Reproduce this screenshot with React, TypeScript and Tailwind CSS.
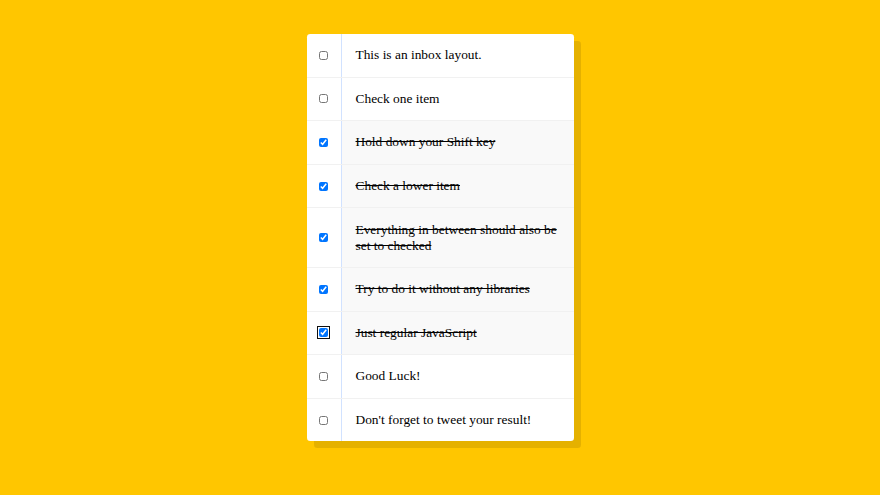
import React from "react";

const items: { text: string; checked: boolean; focus?: boolean }[] = [
  { text: "This is an inbox layout.", checked: false },
  { text: "Check one item", checked: false },
  { text: "Hold down your Shift key", checked: true },
  { text: "Check a lower item", checked: true },
  { text: "Everything in between should also be set to checked", checked: true },
  { text: "Try to do it without any libraries", checked: true },
  { text: "Just regular JavaScript", checked: true, focus: true },
  { text: "Good Luck!", checked: false },
  { text: "Don't forget to tweet your result!", checked: false },
];

export default function App() {
  return (
    <div className="min-h-screen w-full bg-[#ffc600] flex flex-col items-center pt-[34px]">
      <div className="w-[267px] bg-white rounded-[3.3px] shadow-[7px_7px_0_rgba(0,0,0,0.1)]">
        {items.map((it, i) => (
          <div
            key={i}
            className={`flex items-center ${i < items.length - 1 ? "border-b border-[#F1F1F1]" : ""}`}
          >
            <div className="w-[34px] shrink-0 flex items-center justify-center">
              <input
                type="checkbox"
                defaultChecked={it.checked}
                className={`m-0 w-[9px] h-[9px] accent-[#0075ff] ${
                  it.focus ? "outline-[1.5px] outline-solid outline-[#101010] outline-offset-[1px] rounded-[2px]" : ""
                }`}
              />
            </div>
            <p
              className={`flex-1 m-0 pl-[14px] pr-[13px] py-[13.3px] border-l border-[#D1E2FF] text-[13.4px] leading-[16px] text-black ${
                it.checked ? "bg-[#F9F9F9] line-through" : ""
              }`}
              style={{ fontFamily: '"Liberation Serif", "Times New Roman", serif' }}
            >
              {it.text}
            </p>
          </div>
        ))}
      </div>
    </div>
  );
}
